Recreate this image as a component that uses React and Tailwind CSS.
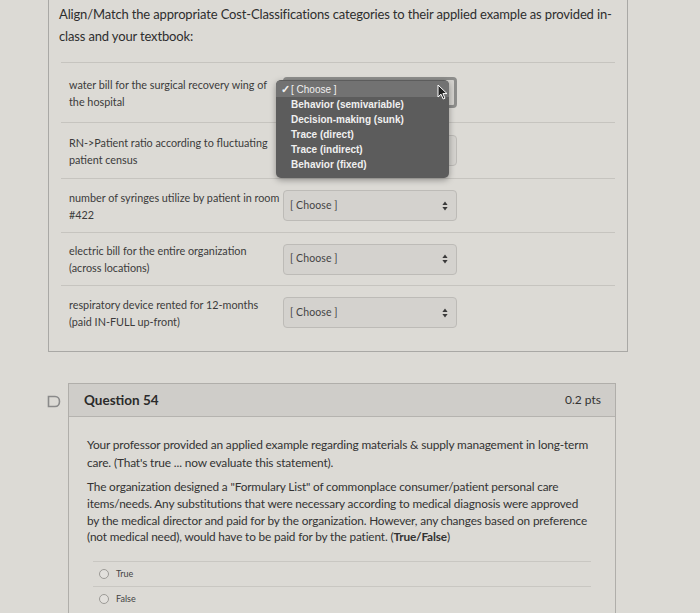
import React from "react";

const Arrows = () => (
  <svg width="6" height="10" viewBox="0 0 6 10" className="shrink-0">
    <path d="M3 0.5 L5.6 4 L0.4 4 Z" fill="#3a3a3a" />
    <path d="M3 9.5 L5.6 6 L0.4 6 Z" fill="#3a3a3a" />
  </svg>
);

const Select = ({ focused, hideText }) => (
  <div
    className={
      "flex items-center justify-between w-[174px] h-[31px] rounded-[4px] bg-[#d4d2ce] pl-[6px] pr-[8px] " +
      (focused ? "border-[3px] border-[#8e8e8c]" : "border border-[#bdbbb7]")
    }
  >
    <span className="text-[10.5px] text-[#444] tracking-[0.1px]">{hideText ? "" : "[ Choose ]"}</span>
    <Arrows />
  </div>
);

const rows = [
  { a: "water bill for the surgical recovery wing of", b: "the hospital", h: "h-[60px]", focused: true, hide: true },
  { a: "RN->Patient ratio according to fluctuating", b: "patient census", h: "h-[56px]", hide: true },
  { a: "number of syringes utilize by patient in room", b: "#422", h: "h-[54px]" },
  { a: "electric bill for the entire organization", b: "(across locations)", h: "h-[53px]" },
  { a: "respiratory device rented for 12-months", b: "(paid IN-FULL up-front)", h: "h-[54px]" },
];

export default function App() {
  return (
    <div
      className="relative w-[700px] h-[613px] overflow-hidden bg-[#dcdad5] text-[#333]"
      style={{ fontFamily: "Lato, 'Open Sans', sans-serif" }}
    >
      {/* Top card */}
      <div className="ml-[48px] w-[580px] border-l border-r border-b border-[#a9a8a5] pb-[12px]">
        <div className="px-[10px] pt-[3px] text-[13px] leading-[22px] text-[#2e2e2e] tracking-[-0.15px] whitespace-nowrap">
          Align/Match the appropriate Cost-Classifications categories to their applied example as provided in-
          <br />
          class and your textbook:
        </div>
        <div className="mt-[15px] mx-[12px]">
          {rows.map((r, i) => (
            <div key={i} className={"flex items-center border-t border-[#c6c4bf] " + r.h}>
              <div className="w-[222px] pl-[8px] text-[10.8px] leading-[17px] text-[#3b3b3b] whitespace-nowrap">
                <div>{r.a}</div>
                <div>{r.b}</div>
              </div>
              <Select focused={r.focused} hideText={r.hide} />
            </div>
          ))}
        </div>
      </div>

      {/* Question 54 */}
      <div className="relative ml-[68px] mt-[31px] w-[548px] border border-[#b0aeaa]">
        <svg
          width="14"
          height="13"
          viewBox="0 0 14 13"
          className="absolute left-[-22px] top-[11px]"
        >
          <path
            d="M1.5 1.5 H8 C11 1.5 12.5 4 12.5 6.5 C12.5 9 11 11.5 8 11.5 H1.5 Z"
            fill="none"
            stroke="#8a8a8a"
            strokeWidth="1.6"
          />
        </svg>
        <div className="flex items-center justify-between h-[33px] bg-[#cfcdc9] border-b border-[#b5b3af] pl-[15px] pr-[14px]">
          <span className="text-[13.5px] font-bold text-[#2b2b2b]">Question 54</span>
          <span className="text-[12px] text-[#333]">0.2 pts</span>
        </div>
        <div className="px-[18px] pt-[19px] pb-[4px] whitespace-nowrap">
          <p className="text-[11.9px] leading-[18px] text-[#333] tracking-[-0.15px]">
            Your professor provided an applied example regarding materials &amp; supply management in long-term
            <br />
            care. (That's true ... now evaluate this statement).
          </p>
          <p className="mt-[7px] text-[11.8px] leading-[16.8px] text-[#333] tracking-[-0.15px]">
            The organization designed a "Formulary List" of commonplace consumer/patient personal care
            <br />
            items/needs. Any substitutions that were necessary according to medical diagnosis were approved
            <br />
            by the medical director and paid for by the organization. However, any changes based on preference
            <br />
            (not medical need), would have to be paid for by the patient. (<b>True/False</b>)
          </p>
          <div className="mt-[15px] mx-[6px]">
            {["True", "False"].map((t) => (
              <div key={t} className="flex items-center h-[25px] border-t border-[#c9c7c2] pl-[6px] gap-[7px]">
                <span className="w-[10px] h-[10px] rounded-full border border-[#9c9a96] bg-[#e2e0dc]" />
                <span className="text-[9px] text-[#444]">{t}</span>
              </div>
            ))}
          </div>
        </div>
      </div>

      {/* Native select popup menu */}
      <div className="absolute left-[276px] top-[80px] w-[173px] h-[98px] rounded-[5px] bg-[#5c5c5c] shadow-[0_2px_6px_rgba(0,0,0,0.35)] overflow-hidden py-[1px]">
        <div
          className="text-[10px] font-bold text-[#f0f0f0]"
          style={{ fontFamily: "'Liberation Sans', Arial, sans-serif" }}
        >
          <div className="flex items-center h-[16px] bg-[#727272] pl-[5px]">
            <span className="w-[10px] text-[11px]">✓</span>
            <span className="font-normal">[ Choose ]</span>
          </div>
          {[
            "Behavior (semivariable)",
            "Decision-making (sunk)",
            "Trace (direct)",
            "Trace (indirect)",
            "Behavior (fixed)",
          ].map((o) => (
            <div key={o} className="flex items-center h-[15px] pl-[15px]">
              {o}
            </div>
          ))}
        </div>
      </div>

      {/* Mouse cursor */}
      <svg width="11" height="16" viewBox="0 0 11 16" className="absolute left-[437px] top-[84px]">
        <path d="M1 1 L1 13 L4 10.2 L6.2 15 L8 14.2 L5.9 9.6 L10 9.6 Z" fill="#222" stroke="#fff" strokeWidth="1" />
      </svg>
    </div>
  );
}
